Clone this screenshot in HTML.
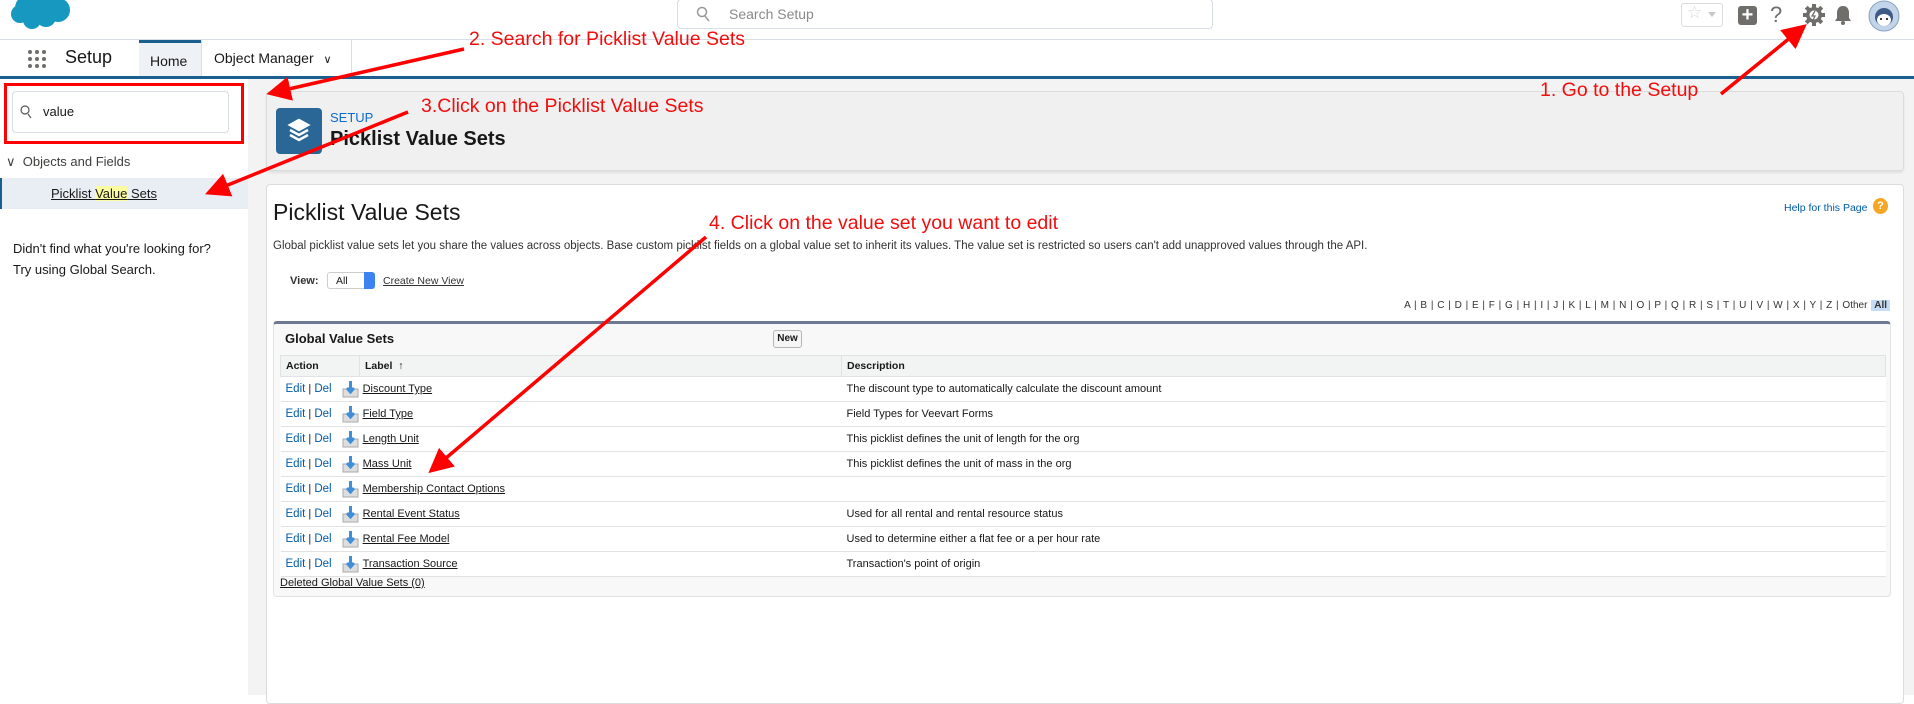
<!DOCTYPE html>
<html><head><meta charset="utf-8"><style>
*{box-sizing:border-box;margin:0;padding:0}
body{width:1914px;height:695px;overflow:hidden;font-family:"Liberation Sans",Arial,sans-serif;background:#fff;position:relative;color:#181818}
.abs{position:absolute}
.red{color:#f20d0d;font-size:19.5px;white-space:nowrap}
a{color:#015ba7}
.tbl{border-collapse:collapse;width:100%;font-size:11px}
.tbl td,.tbl th{border-bottom:1px solid #e0e3e5;height:25px;padding:0 5px;text-align:left;vertical-align:middle}
.tbl th{background:#f2f3f3;font-weight:bold;height:21px;border:1px solid #e0e3e5;font-size:10.5px}
.ed{color:#015ba7;font-size:11.5px}
.ic{display:inline-block;width:17px;height:18px;vertical-align:middle;margin:0 4px 0 10px}
</style></head><body>
<div class="abs" style="left:0;top:0;width:1914px;height:40px;border-bottom:1px solid #d8dde6;background:#fff"></div>
<svg class="abs" style="left:10px;top:-8px" width="62" height="44" viewBox="0 0 62 44"><g fill="#1798c1"><circle cx="18" cy="16" r="13"/><circle cx="34" cy="11" r="12"/><circle cx="48" cy="18" r="12"/><circle cx="22" cy="28" r="9"/><circle cx="36" cy="25" r="10"/><circle cx="10" cy="22" r="9"/></g></svg>
<div class="abs" style="left:677px;top:-1px;width:536px;height:30px;border:1px solid #d8dde6;border-radius:4px;background:#fff"></div>
<svg class="abs" style="left:696px;top:6px" width="14" height="16" viewBox="0 0 14 16"><circle cx="6" cy="6" r="4.5" fill="none" stroke="#999" stroke-width="1.5"/><path d="M9 10l4 5" stroke="#999" stroke-width="1.5"/></svg>
<div class="abs" style="left:729px;top:6px;font-size:14px;color:#8a8a8a">Search Setup</div>
<div class="abs" style="left:1681px;top:3px;width:42px;height:24px;border:1px solid #dcdcdc;border-radius:3px"></div>
<div class="abs" style="left:1687px;top:3px;font-size:17px;color:#d6d6d6">☆</div>
<div class="abs" style="left:1708px;top:12px;width:0;height:0;border-left:4px solid transparent;border-right:4px solid transparent;border-top:5px solid #c8c8c8"></div>
<div class="abs" style="left:1738px;top:6px;width:19px;height:19px;background:#706e6b;border-radius:3px;color:#fff;font-size:20px;font-weight:bold;line-height:19px;text-align:center">+</div>
<div class="abs" style="left:1770px;top:2px;font-size:22px;color:#706e6b">?</div>
<svg class="abs" style="left:1803px;top:4px" width="22" height="22" viewBox="0 0 22 22"><g fill="#706e6b"><circle cx="11" cy="11" r="8"/><rect x="9" y="0" width="4" height="22"/><rect x="0" y="9" width="22" height="4"/><rect x="9" y="0" width="4" height="22" transform="rotate(45 11 11)"/><rect x="9" y="0" width="4" height="22" transform="rotate(-45 11 11)"/></g><circle cx="11" cy="11" r="4.5" fill="#fff"/><path d="M12 7l-3 5h3l-2 4" stroke="#706e6b" fill="none" stroke-width="1.3"/></svg>
<svg class="abs" style="left:1834px;top:4px" width="18" height="22" viewBox="0 0 18 22"><path d="M9 2c-4 0-6 3-6 7v5l-2 3h16l-2-3V9c0-4-2-7-6-7z" fill="#706e6b"/><circle cx="9" cy="19" r="2" fill="#706e6b"/></svg>
<svg class="abs" style="left:1868px;top:0" width="32" height="32" viewBox="0 0 32 32"><circle cx="16" cy="16" r="15" fill="#c1d4ea" stroke="#8aa2bf"/><circle cx="16" cy="17" r="9" fill="#3f5a86"/><ellipse cx="16" cy="20" rx="7" ry="6" fill="#fff"/><circle cx="13" cy="19" r="1" fill="#000"/><circle cx="19" cy="19" r="1" fill="#000"/></svg>
<div class="abs" style="left:0;top:40px;width:1914px;height:37px;background:#fff"></div>
<svg class="abs" style="left:27px;top:49px" width="20" height="20" viewBox="0 0 20 20"><g fill="#706e6b"><circle cx="3" cy="3" r="2"/><circle cx="10" cy="3" r="2"/><circle cx="17" cy="3" r="2"/><circle cx="3" cy="10" r="2"/><circle cx="10" cy="10" r="2"/><circle cx="17" cy="10" r="2"/><circle cx="3" cy="17" r="2"/><circle cx="10" cy="17" r="2"/><circle cx="17" cy="17" r="2"/></g></svg>
<div class="abs" style="left:65px;top:47px;font-size:18px">Setup</div>
<div class="abs" style="left:139px;top:40px;width:62px;height:37px;background:#eef1f6;border-top:3px solid #1b5f8f;font-size:14px;padding:10px 0 0 11px">Home</div>
<div class="abs" style="left:201px;top:40px;width:151px;height:37px;border-right:1px solid #d8dde6;border-left:1px solid #d8dde6;font-size:14px;padding:10px 0 0 12px">Object Manager <span style="font-size:11px;margin-left:6px">&#x2228;</span></div>
<div class="abs" style="left:0;top:76px;width:1914px;height:3px;background:#1b5f8f"></div>
<div class="abs" style="left:0;top:79px;width:1914px;height:616px;background:#f3f3f3"></div>
<div class="abs" style="left:0;top:79px;width:248px;height:616px;background:#fff"></div>
<div class="abs" style="left:4px;top:83px;width:240px;height:61px;border:3px solid #f00"></div>
<div class="abs" style="left:12px;top:91px;width:217px;height:42px;border:1px solid #d8dde6;border-radius:4px"></div>
<svg class="abs" style="left:20px;top:105px" width="12" height="14" viewBox="0 0 12 14"><circle cx="5" cy="5" r="4" fill="none" stroke="#555" stroke-width="1.2"/><path d="M8 9l3 4" stroke="#555" stroke-width="1.2"/></svg>
<div class="abs" style="left:43px;top:104px;font-size:13px">value</div>
<div class="abs" style="left:6px;top:154px;font-size:13px;color:#3e3e3c">&#x2228;&nbsp; Objects and Fields</div>
<div class="abs" style="left:0;top:178px;width:248px;height:31px;background:#e8eef4;border-left:2px solid #1b5f8f"></div>
<div class="abs" style="left:51px;top:186px;font-size:13px;text-decoration:underline">Picklist <span style="background:#fbfba0">Value</span> Sets</div>
<div class="abs" style="left:13px;top:238px;font-size:13px;line-height:21px">Didn't find what you're looking for?<br>Try using Global Search.</div>
<div class="abs" style="left:266px;top:91px;width:1638px;height:80px;background:#f0f0f0;border:1px solid #dcdcdc;border-radius:4px;box-shadow:0 2px 2px rgba(0,0,0,.08)"></div>
<div class="abs" style="left:276px;top:108px;width:46px;height:46px;background:#2a6796;border-radius:4px"></div>
<svg class="abs" style="left:287px;top:118px" width="24" height="26" viewBox="0 0 24 26"><g fill="none" stroke="#fff" stroke-width="2.5"><path d="M12 2L3 7l9 5 9-5z" fill="#fff"/><path d="M3 12l9 5 9-5"/><path d="M3 17l9 5 9-5"/></g></svg>
<div class="abs" style="left:330px;top:110px;font-size:13px;color:#0a6bd2">SETUP</div>
<div class="abs" style="left:330px;top:128px;font-size:20px;font-weight:bold">Picklist Value Sets</div>
<div class="abs" style="left:266px;top:184px;width:1638px;height:520px;background:#fff;border:1px solid #dcdcdc;border-radius:4px"></div>
<div class="abs" style="left:273px;top:199px;font-size:23px">Picklist Value Sets</div>
<div class="abs" style="left:1784px;top:202px;font-size:10.5px;color:#015ba7">Help for this Page</div>
<div class="abs" style="left:1873px;top:198px;width:15px;height:16px;border-radius:50%;background:#f5a623;color:#fff;font-size:11px;font-weight:bold;text-align:center;line-height:16px">?</div>
<div class="abs" style="left:273px;top:240px;font-size:11.5px;color:#333">Global picklist value sets let you share the values across objects. Base custom picklist fields on a global value set to inherit its values. The value set is restricted so users can't add unapproved values through the API.</div>
<div class="abs" style="left:290px;top:275px;font-size:11px;font-weight:bold;color:#333">View:</div>
<div class="abs" style="left:327px;top:272px;width:47px;height:17px;border:1px solid #ccc;border-radius:3px;font-size:10.5px;padding:2px 0 0 8px">All</div>
<div class="abs" style="left:364px;top:272px;width:11px;height:17px;background:#3a83f0;border-radius:0 3px 3px 0"></div>
<div class="abs" style="left:383px;top:275px;font-size:10.5px;text-decoration:underline;color:#333">Create New View</div>
<div class="abs" style="left:1360px;top:300px;width:530px;text-align:right;font-size:10px;color:#333;word-spacing:1px">A | B | C | D | E | F | G | H | I | J | K | L | M | N | O | P | Q | R | S | T | U | V | W | X | Y | Z | Other <span style="background:#c4dcf5;font-weight:bold;padding:0 3px">All</span></div>
<div class="abs" style="left:273px;top:321px;width:1618px;height:276px;background:#f8f8f8;border:1px solid #e0e3e5;border-top:3px solid #6d7893;border-radius:4px"></div>
<div class="abs" style="left:285px;top:331px;font-size:13px;font-weight:bold">Global Value Sets</div>
<div class="abs" style="left:773px;top:330px;width:29px;height:18px;border:1px solid #b5b5b5;border-radius:3px;background:#f5f5f5;font-size:10px;font-weight:bold;text-align:center;line-height:16px">New</div>
<div class="abs" style="left:280px;top:355px;width:1606px;background:#fff">
<table class="tbl">
<tr><th style="width:79px">Action</th><th style="width:482px">Label &nbsp;&#x2191;</th><th>Description</th></tr>
<tr><td colspan="2"><span class="ed">Edit</span> | <span class="ed">Del</span><svg class="ic" viewBox="0 0 17 18"><rect x="1" y="9" width="15" height="8" fill="#ddd" stroke="#aaa"/><path d="M8.5 1v10M5 8l3.5 4 3.5-4" stroke="#3f8fd8" stroke-width="3" fill="none"/></svg><u style="font-size:11px">Discount Type</u></td><td style="font-size:11px">The discount type to automatically calculate the discount amount</td></tr>
<tr><td colspan="2"><span class="ed">Edit</span> | <span class="ed">Del</span><svg class="ic" viewBox="0 0 17 18"><rect x="1" y="9" width="15" height="8" fill="#ddd" stroke="#aaa"/><path d="M8.5 1v10M5 8l3.5 4 3.5-4" stroke="#3f8fd8" stroke-width="3" fill="none"/></svg><u style="font-size:11px">Field Type</u></td><td style="font-size:11px">Field Types for Veevart Forms</td></tr>
<tr><td colspan="2"><span class="ed">Edit</span> | <span class="ed">Del</span><svg class="ic" viewBox="0 0 17 18"><rect x="1" y="9" width="15" height="8" fill="#ddd" stroke="#aaa"/><path d="M8.5 1v10M5 8l3.5 4 3.5-4" stroke="#3f8fd8" stroke-width="3" fill="none"/></svg><u style="font-size:11px">Length Unit</u></td><td style="font-size:11px">This picklist defines the unit of length for the org</td></tr>
<tr><td colspan="2"><span class="ed">Edit</span> | <span class="ed">Del</span><svg class="ic" viewBox="0 0 17 18"><rect x="1" y="9" width="15" height="8" fill="#ddd" stroke="#aaa"/><path d="M8.5 1v10M5 8l3.5 4 3.5-4" stroke="#3f8fd8" stroke-width="3" fill="none"/></svg><u style="font-size:11px">Mass Unit</u></td><td style="font-size:11px">This picklist defines the unit of mass in the org</td></tr>
<tr><td colspan="2"><span class="ed">Edit</span> | <span class="ed">Del</span><svg class="ic" viewBox="0 0 17 18"><rect x="1" y="9" width="15" height="8" fill="#ddd" stroke="#aaa"/><path d="M8.5 1v10M5 8l3.5 4 3.5-4" stroke="#3f8fd8" stroke-width="3" fill="none"/></svg><u style="font-size:11px">Membership Contact Options</u></td><td></td></tr>
<tr><td colspan="2"><span class="ed">Edit</span> | <span class="ed">Del</span><svg class="ic" viewBox="0 0 17 18"><rect x="1" y="9" width="15" height="8" fill="#ddd" stroke="#aaa"/><path d="M8.5 1v10M5 8l3.5 4 3.5-4" stroke="#3f8fd8" stroke-width="3" fill="none"/></svg><u style="font-size:11px">Rental Event Status</u></td><td style="font-size:11px">Used for all rental and rental resource status</td></tr>
<tr><td colspan="2"><span class="ed">Edit</span> | <span class="ed">Del</span><svg class="ic" viewBox="0 0 17 18"><rect x="1" y="9" width="15" height="8" fill="#ddd" stroke="#aaa"/><path d="M8.5 1v10M5 8l3.5 4 3.5-4" stroke="#3f8fd8" stroke-width="3" fill="none"/></svg><u style="font-size:11px">Rental Fee Model</u></td><td style="font-size:11px">Used to determine either a flat fee or a per hour rate</td></tr>
<tr><td colspan="2"><span class="ed">Edit</span> | <span class="ed">Del</span><svg class="ic" viewBox="0 0 17 18"><rect x="1" y="9" width="15" height="8" fill="#ddd" stroke="#aaa"/><path d="M8.5 1v10M5 8l3.5 4 3.5-4" stroke="#3f8fd8" stroke-width="3" fill="none"/></svg><u style="font-size:11px">Transaction Source</u></td><td style="font-size:11px">Transaction's point of origin</td></tr>
</table></div>
<div class="abs" style="left:280px;top:577px;font-size:11px;text-decoration:underline">Deleted Global Value Sets (0)</div>
<div class="abs red" style="left:469px;top:28px">2. Search for Picklist Value Sets</div>
<div class="abs red" style="left:421px;top:95px">3.Click on the Picklist Value Sets</div>
<div class="abs red" style="left:709px;top:212px">4. Click on the value set you want to edit</div>
<div class="abs red" style="left:1540px;top:79px">1. Go to the Setup</div>
<svg class="abs" style="left:0;top:0" width="1914" height="695">
<defs><marker id="ah" markerWidth="7" markerHeight="7" refX="3" refY="3.5" orient="auto"><path d="M0 0L7 3.5L0 7z" fill="#f00"/></marker></defs>
<g stroke="#f00" stroke-width="3.5" fill="none" marker-end="url(#ah)">
<line x1="1721" y1="94" x2="1796" y2="33"/>
<line x1="464" y1="49" x2="280" y2="91"/>
<line x1="408" y1="112" x2="218" y2="189"/>
<line x1="706" y1="237" x2="439" y2="464"/>
</g></svg>
</body></html>
